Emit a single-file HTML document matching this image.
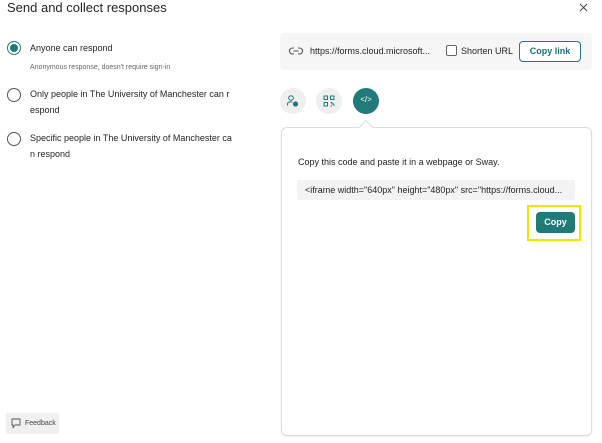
<!DOCTYPE html>
<html><head><style>
*{margin:0;padding:0;box-sizing:border-box}
body{width:602px;height:443px;background:#fff;font-family:"Liberation Sans",sans-serif;color:#242424;position:relative;overflow:hidden}
.a{position:absolute}
.t{font-size:9px;white-space:nowrap}
.rad{width:14px;height:14px;border-radius:50%;border:1.3px solid #555}
</style></head><body>
<div class="a" style="left:7px;top:0px;font-size:13px;color:#242424">Send and collect responses</div>
<svg class="a" style="left:579px;top:3px" width="9" height="9" viewBox="0 0 9 9"><path d="M1 1l7 7M8 1L1 8" stroke="#444" stroke-width="1"/></svg>

<div class="a rad" style="left:7px;top:41px;border:1.5px solid #1f7a78;background:#fff"><div class="a" style="left:2px;top:2px;width:8px;height:8px;border-radius:50%;background:#1f7a78"></div></div>
<div class="a t" style="left:30px;top:43px">Anyone can respond</div>
<div class="a" style="left:30px;top:64px;font-size:7px;color:#666">Anonymous response, doesn't require sign-in</div>
<div class="a rad" style="left:7px;top:88px"></div>
<div class="a t" style="left:30px;top:89px">Only people in The University of Manchester can r</div>
<div class="a t" style="left:30px;top:105px">espond</div>
<div class="a rad" style="left:7px;top:132px"></div>
<div class="a t" style="left:30px;top:133px">Specific people in The University of Manchester ca</div>
<div class="a t" style="left:30px;top:149px">n respond</div>

<div class="a" style="left:280px;top:33px;width:312px;height:37px;background:#f6f6f6;border-radius:4px"></div>
<svg class="a" style="left:289px;top:46px" width="14" height="10" viewBox="0 0 14 10"><path d="M5 2H3.5a3 3 0 0 0 0 6H5M9 2h1.5a3 3 0 0 1 0 6H9M4.5 5h5" fill="none" stroke="#555" stroke-width="1.1"/></svg>
<div class="a t" style="left:310px;top:46px">https://forms.cloud.microsoft...</div>
<div class="a" style="left:446px;top:45px;width:11px;height:11px;border:1px solid #666;border-radius:2px;background:#fff"></div>
<div class="a t" style="left:461px;top:46px">Shorten URL</div>
<div class="a" style="left:519px;top:41px;width:62px;height:21px;border:1px solid #1f7a78;border-radius:4px;background:#fff;color:#1f6f6d;font-size:9px;font-weight:bold;text-align:center;line-height:19px">Copy link</div>

<div class="a" style="left:280px;top:88px;width:26px;height:26px;border-radius:50%;background:#efefef"></div>
<svg class="a" style="left:286px;top:94px" width="14" height="14" viewBox="0 0 14 14"><circle cx="5" cy="4" r="2.3" fill="none" stroke="#1f7a78" stroke-width="1"/><path d="M1.5 11.5v-1.5a2 2 0 0 1 2-2h3" fill="none" stroke="#1f7a78" stroke-width="1"/><circle cx="9.5" cy="10" r="2.6" fill="#1f7a78"/></svg>
<div class="a" style="left:316px;top:88px;width:26px;height:26px;border-radius:50%;background:#efefef"></div>
<svg class="a" style="left:323px;top:95px" width="12" height="12" viewBox="0 0 12 12" fill="none" stroke="#1f7a78" stroke-width="1"><rect x="1" y="1" width="3.5" height="3.5"/><rect x="7.5" y="1" width="3.5" height="3.5"/><rect x="1" y="7.5" width="3.5" height="3.5"/><path d="M7.5 7.5h1.5v1.5h2M7.5 11h1.5M11 9.5V11"/></svg>
<div class="a" style="left:353px;top:88px;width:26px;height:26px;border-radius:50%;background:#1f7a78"></div>
<div class="a" style="left:360px;top:95px;font-size:8px;color:#fff;width:12px;text-align:center">&lt;/&gt;</div>

<div class="a" style="left:281px;top:127px;width:311px;height:309px;border:1px solid #ddd;border-radius:6px;background:#fff;box-shadow:0 1px 2px rgba(0,0,0,.08)"></div>
<div class="a" style="left:361px;top:122px;width:10px;height:10px;background:#fff;border-left:1px solid #ddd;border-top:1px solid #ddd;transform:rotate(45deg)"></div>
<div class="a t" style="left:298px;top:157px">Copy this code and paste it in a webpage or Sway.</div>
<div class="a" style="left:297px;top:180px;width:278px;height:20px;background:#f3f3f3;border-radius:2px"></div>
<div class="a t" style="left:305px;top:185px;font-size:9px">&lt;iframe width="640px" height="480px" src="https://forms.cloud...</div>
<div class="a" style="left:527px;top:205px;width:54px;height:36px;border:2px solid #f5e400"></div>
<div class="a" style="left:536px;top:212px;width:39px;height:21px;background:#1f7a78;border-radius:4px;color:#fff;font-size:9px;font-weight:bold;text-align:center;line-height:21px">Copy</div>

<div class="a" style="left:6px;top:413px;width:53px;height:21px;background:#f0f0f0"></div>
<svg class="a" style="left:11px;top:418px" width="10" height="11" viewBox="0 0 10 11"><path d="M1 1h8v6H4L2 9.5V7H1z" fill="none" stroke="#555" stroke-width="0.9"/></svg>
<div class="a" style="left:25px;top:420px;font-size:7px;color:#444">Feedback</div>
</body></html>
